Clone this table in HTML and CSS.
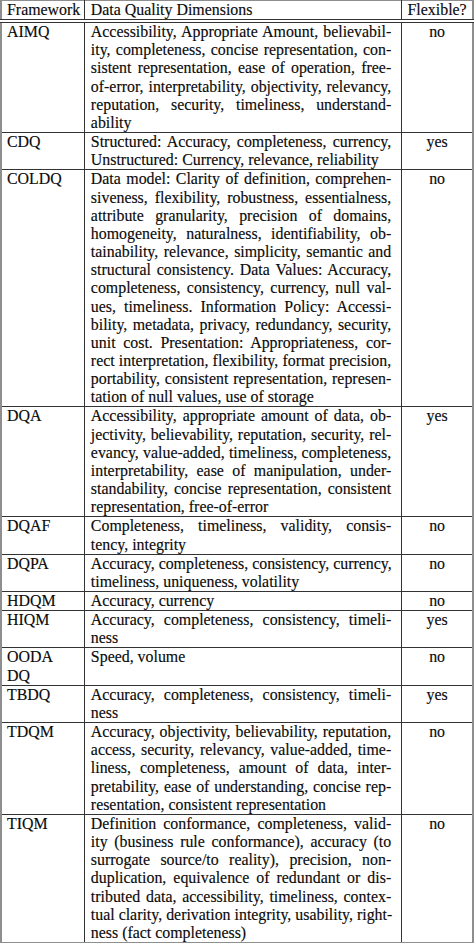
FILE: index.html
```html
<!DOCTYPE html>
<html>
<head>
<meta charset="utf-8">
<link rel="stylesheet" href="styles.css">
</head>
<body>
<table class="dq">
<colgroup><col class="c1"><col class="c2"><col class="c3"></colgroup>
<thead>
<tr><th class="fw">Framework</th><th class="dim">Data Quality Dimensions</th><th class="flex">Flexible?</th></tr>
</thead>
<tbody>
<tr><td class="fw">AIMQ</td><td class="dim">
<span class="ln">Accessibility, Appropriate Amount, believabil-</span>
<span class="ln">ity, completeness, concise representation, con-</span>
<span class="ln">sistent representation, ease of operation, free-</span>
<span class="ln">of-error, interpretability, objectivity, relevancy,</span>
<span class="ln">reputation, security, timeliness, understand-</span>
<span class="ln last">ability</span>
</td><td class="flex">no</td></tr>
<tr><td class="fw">CDQ</td><td class="dim">
<span class="ln">Structured: Accuracy, completeness, currency,</span>
<span class="ln last">Unstructured: Currency, relevance, reliability</span>
</td><td class="flex">yes</td></tr>
<tr><td class="fw">COLDQ</td><td class="dim">
<span class="ln">Data model: Clarity of definition, comprehen-</span>
<span class="ln">siveness, flexibility, robustness, essentialness,</span>
<span class="ln">attribute granularity, precision of domains,</span>
<span class="ln">homogeneity, naturalness, identifiability, ob-</span>
<span class="ln">tainability, relevance, simplicity, semantic and</span>
<span class="ln">structural consistency. Data Values: Accuracy,</span>
<span class="ln">completeness, consistency, currency, null val-</span>
<span class="ln">ues, timeliness. Information Policy: Accessi-</span>
<span class="ln">bility, metadata, privacy, redundancy, security,</span>
<span class="ln">unit cost. Presentation: Appropriateness, cor-</span>
<span class="ln">rect interpretation, flexibility, format precision,</span>
<span class="ln">portability, consistent representation, represen-</span>
<span class="ln last">tation of null values, use of storage</span>
</td><td class="flex">no</td></tr>
<tr><td class="fw">DQA</td><td class="dim">
<span class="ln">Accessibility, appropriate amount of data, ob-</span>
<span class="ln">jectivity, believability, reputation, security, rel-</span>
<span class="ln">evancy, value-added, timeliness, completeness,</span>
<span class="ln">interpretability, ease of manipulation, under-</span>
<span class="ln">standability, concise representation, consistent</span>
<span class="ln last">representation, free-of-error</span>
</td><td class="flex">yes</td></tr>
<tr><td class="fw">DQAF</td><td class="dim">
<span class="ln">Completeness, timeliness, validity, consis-</span>
<span class="ln last">tency, integrity</span>
</td><td class="flex">no</td></tr>
<tr><td class="fw">DQPA</td><td class="dim">
<span class="ln">Accuracy, completeness, consistency, currency,</span>
<span class="ln last">timeliness, uniqueness, volatility</span>
</td><td class="flex">no</td></tr>
<tr><td class="fw">HDQM</td><td class="dim">
<span class="ln last">Accuracy, currency</span>
</td><td class="flex">no</td></tr>
<tr><td class="fw">HIQM</td><td class="dim">
<span class="ln">Accuracy, completeness, consistency, timeli-</span>
<span class="ln last">ness</span>
</td><td class="flex">yes</td></tr>
<tr><td class="fw">OODA<br>DQ</td><td class="dim">
<span class="ln last">Speed, volume</span>
</td><td class="flex">no</td></tr>
<tr><td class="fw">TBDQ</td><td class="dim">
<span class="ln">Accuracy, completeness, consistency, timeli-</span>
<span class="ln last">ness</span>
</td><td class="flex">yes</td></tr>
<tr><td class="fw">TDQM</td><td class="dim">
<span class="ln">Accuracy, objectivity, believability, reputation,</span>
<span class="ln">access, security, relevancy, value-added, time-</span>
<span class="ln">liness, completeness, amount of data, inter-</span>
<span class="ln">pretability, ease of understanding, concise rep-</span>
<span class="ln last">resentation, consistent representation</span>
</td><td class="flex">no</td></tr>
<tr><td class="fw">TIQM</td><td class="dim">
<span class="ln">Definition conformance, completeness, valid-</span>
<span class="ln">ity (business rule conformance), accuracy (to</span>
<span class="ln">surrogate source/to reality), precision, non-</span>
<span class="ln">duplication, equivalence of redundant or dis-</span>
<span class="ln">tributed data, accessibility, timeliness, contex-</span>
<span class="ln">tual clarity, derivation integrity, usability, right-</span>
<span class="ln last">ness (fact completeness)</span>
</td><td class="flex">no</td></tr>
</tbody>
</table>
</body>
</html>
```

FILE: styles.css
```css
html, body {
  margin: 0;
  padding: 0;
  background: #ffffff;
}
.dq {
  width: 474px;
  table-layout: fixed;
  border-collapse: collapse;
  font-family: "Liberation Serif", "Times New Roman", serif;
  font-size: 15.9px;
  line-height: 18.15px;
  color: #0a0a0a;
  -webkit-text-stroke: 0.15px #0a0a0a;
  border-top: 1px solid #8e8e8e;
  border-left: 2px solid #8e8e8e;
  border-right: 2px solid #8e8e8e;
  border-bottom: 2px solid #8e8e8e;
}
.c1 { width: 83px; }
.c2 { width: 316px; }
.c3 { width: 71px; }
th, td {
  padding: 0;
  vertical-align: top;
  font-weight: normal;
  border-bottom: 1px solid #333333;
}
thead th {
  border-bottom: 4px double #333333;
}
.fw {
  text-align: left;
  padding-left: 5px;
  border-right: 1px solid #333333;
}
.dim {
  text-align: left;
  padding-left: 6px;
  padding-right: 10px;
  border-right: 1px solid #333333;
}
.flex {
  text-align: center;
}
.ln {
  display: block;
  white-space: nowrap;
  text-align: justify;
  text-align-last: justify;
}
.ln.last {
  text-align-last: left;
}
```
